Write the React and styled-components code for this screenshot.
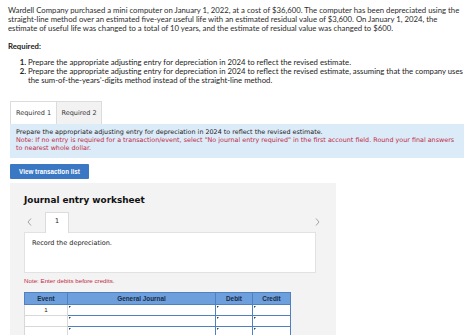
import React from "react";
import styled, { createGlobalStyle } from "styled-components";

const GlobalStyle = createGlobalStyle`
  html, body {
    margin: 0;
    padding: 0;
    background: #ffffff;
  }
  body {
    font-family: "Lato", "Liberation Sans", sans-serif;
    color: #222;
  }
`;

const Page = styled.div`
  padding: 6px 8px 0 8px;
  width: 474px;
  height: 335px;
  box-sizing: border-box;
  overflow: hidden;
`;

const Intro = styled.p`
  margin: 0;
  font-size: 7.75px;
  line-height: 9px;
  color: #2b2b2b;
`;

const RequiredTitle = styled.div`
  margin-top: 9px;
  font-size: 7.75px;
  line-height: 9px;
  font-weight: 700;
`;

const List = styled.ol`
  margin: 7px 0 0 0;
  padding-left: 20px;
  font-size: 7.75px;
  line-height: 9px;
  li::marker {
    font-weight: 700;
  }
`;

const Tabs = styled.div`
  display: flex;
  margin: 16px 0 0 2px;
  font-family: "DejaVu Sans", Verdana, sans-serif;
`;

const Tab = styled.div`
  width: ${p => p.w}px;
  height: 23px;
  box-sizing: border-box;
  display: flex;
  align-items: center;
  justify-content: center;
  font-size: 6.5px;
  color: #333;
  background: ${p => (p.active ? "#ffffff" : "#f2f2f2")};
  border: 1px solid #dcdcdc;
  border-bottom: none;
  border-left: ${p => (p.active ? "1px solid #dcdcdc" : "none")};
`;

const InfoBox = styled.div`
  margin-left: 2px;
  width: 454px;
  box-sizing: border-box;
  background: #dcebf8;
  padding: 4px 6px 6px 6px;
  font-family: "DejaVu Sans", Verdana, sans-serif;
  font-size: 6.4px;
  line-height: 8px;
  color: #222;
`;

const RedText = styled.div`
  color: #c02a45;
`;

const ViewButton = styled.button`
  margin: 6px 0 0 2px;
  width: 79px;
  height: 15px;
  border: none;
  border-radius: 1px;
  background: #3a78c4;
  color: #ffffff;
  font-family: "Liberation Sans", Arial, sans-serif;
  font-weight: 700;
  font-size: 6.3px;
  padding: 0;
  display: block;
`;

const Worksheet = styled.div`
  margin: 4px 0 0 2px;
  width: 326px;
  background: #f3f3f3;
  padding: 11px 20px 20px 14px;
  box-sizing: border-box;
  font-family: "DejaVu Sans", Verdana, sans-serif;
`;

const WorksheetTitle = styled.h3`
  margin: 0;
  font-size: 8.9px;
  line-height: 12px;
  font-weight: 700;
  color: #111;
`;

const NavRow = styled.div`
  display: flex;
  align-items: flex-end;
  margin-top: 6px;
  height: 20px;
`;

const Arrow = styled.div`
  width: 18px;
  align-self: center;
  display: flex;
  justify-content: ${p => (p.right ? "flex-end" : "flex-start")};
  padding-left: ${p => (p.right ? "0" : "3px")};
  margin-left: ${p => (p.right ? "auto" : "0")};
  margin-right: ${p => (p.right ? "-4px" : "0")};
`;

const StepTab = styled.div`
  width: 24px;
  height: 21px;
  box-sizing: border-box;
  background: #ffffff;
  border: 1px solid #dcdcdc;
  border-bottom: none;
  font-size: 6.4px;
  display: flex;
  justify-content: center;
  padding-top: 4px;
  margin-bottom: -1px;
  position: relative;
  z-index: 1;
`;

const ContentBox = styled.div`
  height: 41px;
  box-sizing: border-box;
  background: #ffffff;
  border: 1px solid #e2e2e2;
  padding: 6px 7px;
  font-size: 6.5px;
  line-height: 9px;
  color: #222;
`;

const NoteText = styled.div`
  margin-top: 4px;
  font-family: "Liberation Sans", Arial, sans-serif;
  font-size: 6.2px;
  line-height: 8px;
  color: #c02a45;
`;

const Table = styled.table`
  margin-top: 7px;
  border-collapse: collapse;
  font-family: "Liberation Sans", Arial, sans-serif;
  table-layout: fixed;
  width: 262px;
`;

const Row = styled.tr`
  height: ${p => p.h}px;
`;

const Th = styled.th`
  width: ${p => p.w}px;
  padding: 0;
  background: #6d9fdc;
  color: #1c2c44;
  font-size: 6.4px;
  font-weight: 700;
  border: 1px solid #4f80c0;
`;

const EventCell = styled.td`
  padding: 0;
  background: #ffffff;
  border: 1px solid #d8d8d8;
  text-align: center;
  font-size: 6.2px;
  line-height: 8px;
  color: #222;
`;

const InputCell = styled.td`
  padding: 0;
  background: #ffffff;
  border: 1.5px solid #4f80c0;
  position: relative;
  &::before {
    content: "";
    position: absolute;
    left: 1px;
    top: 1px;
    border-top: 2px solid #2b3f63;
    border-right: 2px solid transparent;
  }
`;

const Chevron = ({ dir }) => (
  <svg width="5" height="8" viewBox="0 0 5 8">
    <path
      d={dir === "left" ? "M4 0.5 L1 4 L4 7.5" : "M1 0.5 L4 4 L1 7.5"}
      fill="none"
      stroke="#9a9a9a"
      strokeWidth="0.9"
    />
  </svg>
);

const rows = ["1", "", ""];

export default function App() {
  return (
    <Page>
      <GlobalStyle />
      <Intro>
        Wardell Company purchased a mini computer on January 1, 2022, at a cost of $36,600. The computer has been
        depreciated using the straight-line method over an estimated five-year useful life with an estimated residual
        value of $3,600. On January 1, 2024, the estimate of useful life was changed to a total of 10 years, and the
        estimate of residual value was changed to $600.
      </Intro>
      <RequiredTitle>Required:</RequiredTitle>
      <List>
        <li>Prepare the appropriate adjusting entry for depreciation in 2024 to reflect the revised estimate.</li>
        <li>
          Prepare the appropriate adjusting entry for depreciation in 2024 to reflect the revised estimate, assuming
          that the company uses the sum-of-the-years'-digits method instead of the straight-line method.
        </li>
      </List>

      <Tabs>
        <Tab active w={47}>Required 1</Tab>
        <Tab w={45}>Required 2</Tab>
      </Tabs>
      <InfoBox>
        <div>Prepare the appropriate adjusting entry for depreciation in 2024 to reflect the revised estimate.</div>
        <RedText>
          Note: If no entry is required for a transaction/event, select "No journal entry required" in the first
          account field. Round your final answers to nearest whole dollar.
        </RedText>
      </InfoBox>

      <ViewButton>View transaction list</ViewButton>

      <Worksheet>
        <WorksheetTitle>Journal entry worksheet</WorksheetTitle>
        <NavRow>
          <Arrow>
            <Chevron dir="left" />
          </Arrow>
          <StepTab>1</StepTab>
          <Arrow right>
            <Chevron dir="right" />
          </Arrow>
        </NavRow>
        <ContentBox>Record the depreciation.</ContentBox>
        <NoteText>Note: Enter debits before credits.</NoteText>
        <Table>
          <thead>
            <Row h={12}>
              <Th w={42}>Event</Th>
              <Th w={147}>General Journal</Th>
              <Th w={36}>Debit</Th>
              <Th w={37}>Credit</Th>
            </Row>
          </thead>
          <tbody>
            {rows.map((ev, i) => (
              <Row h={11} key={i}>
                <EventCell>{ev}</EventCell>
                <InputCell />
                <InputCell />
                <InputCell />
              </Row>
            ))}
          </tbody>
        </Table>
      </Worksheet>
    </Page>
  );
}
